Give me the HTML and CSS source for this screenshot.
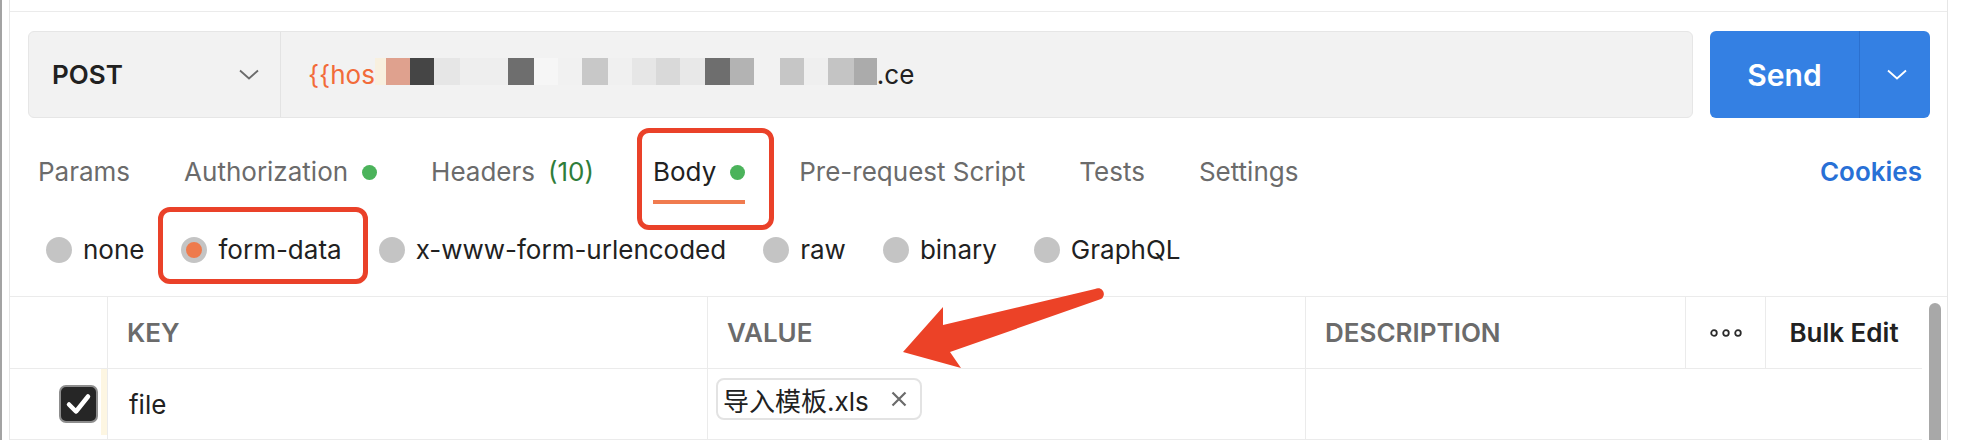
FILE: index.html
```html
<!DOCTYPE html>
<html lang="zh-CN">
<head>
<meta charset="utf-8">
<title>Postman request</title>
<link rel="stylesheet" href="styles.css">
</head>
<body>
<div class="window">
  <div class="panel">
    <div class="topstrip"></div>

    <div class="request">
      <div class="urlbar">
        <div class="method">
          <span class="method-name">POST</span>
          <svg class="chev" viewBox="0 0 20 11"><path d="M1 1.5 L10 9.5 L19 1.5"/></svg>
        </div>
        <div class="url">
          <span class="var">{{hos</span>
          <span class="mosaic"><span></span><span></span><span></span><span></span><span></span><span></span><span></span><span></span><span></span><span></span><span></span><span></span><span></span><span></span><span></span><span></span><span></span><span></span><span></span><span></span></span>
          <span class="url-rest">.ce</span>
        </div>
      </div>
      <div class="send">
        <span class="send-main">Send</span>
        <span class="send-more"><svg class="chev chev-white" viewBox="0 0 20 11"><path d="M1 1.5 L10 9.5 L19 1.5"/></svg></span>
      </div>
    </div>

    <div class="tabs">
      <div class="tab">Params</div>
      <div class="tab">Authorization<span class="dot"></span></div>
      <div class="tab tab-headers">Headers<span class="count">(10)</span></div>
      <div class="tab active">Body<span class="dot"></span></div>
      <div class="tab">Pre-request Script</div>
      <div class="tab">Tests</div>
      <div class="tab">Settings</div>
      <div class="cookies">Cookies</div>
    </div>

    <div class="bodytypes">
      <div class="radio"><span class="circle"></span>none</div>
      <div class="radio checked"><span class="circle"></span>form-data</div>
      <div class="radio"><span class="circle"></span>x-www-form-urlencoded</div>
      <div class="radio"><span class="circle"></span>raw</div>
      <div class="radio"><span class="circle"></span>binary</div>
      <div class="radio"><span class="circle"></span>GraphQL</div>
    </div>

    <div class="table-wrap">
      <div class="grid">
        <div class="cell"></div>
        <div class="cell hcell">KEY</div>
        <div class="cell hcell">VALUE</div>
        <div class="cell hcell">DESCRIPTION</div>
        <div class="cell center">
          <svg class="more" viewBox="0 0 32 8"><circle cx="4" cy="4" r="2.8"/><circle cx="16" cy="4" r="2.8"/><circle cx="28" cy="4" r="2.8"/></svg>
        </div>
        <div class="cell center last bulk">Bulk Edit</div>

        <div class="cell cb-cell">
          <span class="checkbox"><svg viewBox="0 0 35 33"><path d="M8 17 L15 24 L27 9"/></svg></span>
          <span class="drag"></span>
        </div>
        <div class="cell key">file</div>
        <div class="cell value">
          <span class="chip">导入模板.xls<svg class="x" viewBox="0 0 16 16"><path d="M1.5 1.5 L14.5 14.5 M14.5 1.5 L1.5 14.5"/></svg></span>
        </div>
        <div class="cell desc last"></div>
      </div>
      <div class="scroll"><div class="thumb"></div></div>
    </div>

    <div class="annot annot-body"></div>
    <div class="annot annot-form"></div>
    <svg class="arrow" viewBox="0 0 220 90">
      <path d="M205 6 L53 42 L53 24 L13 69 L71 85 L60 69 L211 16 A5.5 5.5 0 0 0 205 6 Z"/>
    </svg>
  </div>
</div>
</body>
</html>
```

FILE: styles.css
```css
* { box-sizing: border-box; }

html, body {
  margin: 0;
  padding: 0;
  background: #ffffff;
}

body {
  width: 1968px;
  height: 440px;
  overflow: hidden;
  font-family: Inter, "Noto Sans", "Noto Sans CJK SC", sans-serif;
  color: #212121;
}

.window {
  height: 440px;
  border-left: 2px solid #a3a3a3;
}

.panel {
  position: relative;
  margin-left: 7px;
  width: 1939px;
  height: 440px;
  overflow: hidden;
  border-left: 1px solid #e6e6e6;
  border-right: 1px solid #e6e6e6;
}

.topstrip {
  height: 12px;
  border-bottom: 1px solid #ebebeb;
}

/* request bar */
.request {
  display: flex;
  gap: 17px;
  padding: 19px 17px 0 18px;
}

.urlbar {
  flex: 1;
  display: flex;
  height: 87px;
  background: #f2f2f2;
  border: 1px solid #e6e6e6;
  border-radius: 6px;
}

.method {
  width: 252px;
  display: flex;
  align-items: center;
  justify-content: space-between;
  padding: 0 21px 0 23px;
  border-right: 1px solid #e3e3e3;
}

.method-name {
  font-size: 26px;
  font-weight: 600;
  color: #212121;
}

.chev {
  width: 20px;
  height: 11px;
  fill: none;
  stroke: #6b6b6b;
  stroke-width: 1.8;
}

.chev-white { stroke: #ffffff; }

.url {
  display: flex;
  align-items: center;
  padding-left: 27px;
  font-size: 26px;
  color: #212121;
}

.var { color: #f26b3a; }

.mosaic {
  display: flex;
  height: 27px;
  margin-top: -6px;
}

.mosaic span { width: 24px; height: 27px; }
.mosaic span:nth-child(1)  { width: 11px; background: #f8f0df; }
.mosaic span:nth-child(2)  { background: #dfa18e; }
.mosaic span:nth-child(3)  { background: #454545; }
.mosaic span:nth-child(4)  { width: 26px; background: #e6e6e6; }
.mosaic span:nth-child(5)  { width: 48px; background: #eeeeee; }
.mosaic span:nth-child(6)  { width: 26px; background: #6e6e6e; }
.mosaic span:nth-child(7)  { background: #f6f6f6; }
.mosaic span:nth-child(8)  { background: #f1f1f1; }
.mosaic span:nth-child(9)  { width: 26px; background: #c8c8c8; }
.mosaic span:nth-child(10) { background: #f0f0f0; }
.mosaic span:nth-child(11) { background: #e6e6e6; }
.mosaic span:nth-child(12) { background: #d9d9d9; }
.mosaic span:nth-child(13) { width: 25px; background: #e8e8e8; }
.mosaic span:nth-child(14) { width: 25px; background: #6e6e6e; }
.mosaic span:nth-child(15) { background: #b3b3b3; }
.mosaic span:nth-child(16) { width: 26px; background: #f2f2f2; }
.mosaic span:nth-child(17) { background: #c6c6c6; }
.mosaic span:nth-child(18) { background: #efefef; }
.mosaic span:nth-child(19) { width: 26px; background: #c4c4c4; }
.mosaic span:nth-child(20) { width: 23px; background: #ababab; }

.send {
  width: 220px;
  height: 87px;
  display: flex;
  background: #3480e3;
  border-radius: 6px;
  color: #ffffff;
}

.send-main {
  width: 150px;
  display: flex;
  align-items: center;
  justify-content: center;
  font-size: 30px;
  font-weight: 600;
  border-right: 1px solid #2b70cf;
}

.send-more {
  flex: 1;
  display: flex;
  align-items: center;
  justify-content: center;
  padding-left: 4px;
}

/* tabs */
.tabs {
  display: flex;
  align-items: flex-start;
  padding: 37px 25px 0 28px;
}

.tab {
  display: flex;
  align-items: center;
  margin-right: 54px;
  padding-bottom: 11px;
  border-bottom: 4px solid transparent;
  font-size: 26px;
  line-height: 34px;
  color: #6b6b6b;
}

.tab-headers { margin-right: 59px; }

.tab.active {
  color: #212121;
  border-bottom-color: #f07b4f;
}

.dot {
  width: 15px;
  height: 15px;
  margin-left: 14px;
  border-radius: 50%;
  background: #4bb35b;
}

.count {
  margin-left: 13px;
  color: #2f7d3a;
}

.cookies {
  margin-left: auto;
  font-size: 26px;
  line-height: 34px;
  font-weight: 600;
  color: #2870d6;
}

/* body types */
.bodytypes {
  display: flex;
  align-items: center;
  gap: 37px;
  height: 34px;
  margin-top: 29px;
  padding-left: 36px;
}

.radio {
  display: flex;
  align-items: center;
  gap: 11px;
  font-size: 26px;
  line-height: 34px;
  color: #212121;
}

.circle {
  width: 26px;
  height: 26px;
  border-radius: 50%;
  background: #c4c4c4;
}

.radio.checked .circle {
  background: #ee7a4c;
  border: 5px solid #c4c4c4;
}

/* table */
.table-wrap {
  display: flex;
  margin-top: 29px;
  border-top: 1px solid #ebebeb;
}

.grid {
  display: grid;
  grid-template-columns: 98px 600px 598px 380px 80px 156px;
  grid-template-rows: 72px 71px;
}

.cell {
  display: flex;
  align-items: center;
  border-right: 1px solid #ebebeb;
  border-bottom: 1px solid #ebebeb;
}

.cell.last { border-right: none; }

.hcell {
  padding-left: 19px;
  font-size: 26px;
  font-weight: 600;
  color: #6b6b6b;
}

.center { justify-content: center; }

.bulk {
  font-size: 26px;
  font-weight: 600;
  color: #212121;
}

.more {
  width: 32px;
  height: 8px;
  fill: none;
  stroke: #2b2b2b;
  stroke-width: 1.8;
}

.cb-cell {
  justify-content: flex-end;
}

.checkbox {
  display: flex;
  width: 39px;
  height: 38px;
  margin-right: 3px;
  background: #262626;
  border: 2px solid #8d8d8d;
  border-radius: 7px;
}

.checkbox svg {
  width: 35px;
  height: 34px;
  fill: none;
  stroke: #ffffff;
  stroke-width: 4.5;
  stroke-linecap: round;
  stroke-linejoin: round;
}

.drag {
  align-self: stretch;
  width: 6px;
  margin-bottom: 4px;
  background: #fdf6e2;
}

.key {
  padding-left: 21px;
  font-size: 26px;
  color: #212121;
}

.value { align-items: flex-start; }

.chip {
  display: flex;
  align-items: center;
  gap: 22px;
  height: 42px;
  margin: 9px 0 0 8px;
  padding: 0 13px 0 5px;
  border: 2px solid #e3e3e3;
  border-radius: 8px;
  font-family: Inter, "Noto Sans CJK SC", sans-serif;
  font-size: 26px;
  color: #212121;
}

.x {
  width: 16px;
  height: 16px;
  fill: none;
  stroke: #6b6b6b;
  stroke-width: 2.2;
}

.desc { grid-column: span 3; }

.scroll {
  width: 24px;
  padding: 6px 0 0 7px;
}

.thumb {
  width: 12px;
  height: 138px;
  border-radius: 6px 6px 0 0;
  background: #a8a8a8;
}

/* annotations drawn over the screenshot */
.annot {
  position: absolute;
  border: 5px solid #ea4129;
  border-radius: 12px;
}

.annot-body {
  left: 627px;
  top: 128px;
  width: 137px;
  height: 102px;
}

.annot-form {
  left: 148px;
  top: 207px;
  width: 210px;
  height: 77px;
}

.arrow {
  position: absolute;
  left: 880px;
  top: 283px;
  width: 220px;
  height: 90px;
  fill: #ec4227;
}
```
